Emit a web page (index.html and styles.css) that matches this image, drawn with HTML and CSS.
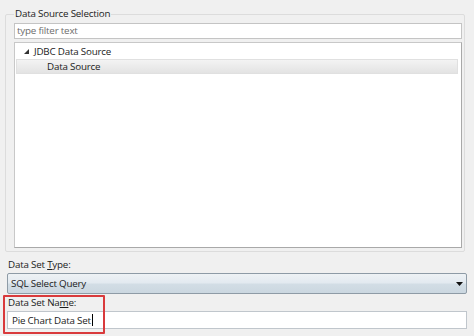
FILE: index.html
```html
<!DOCTYPE html>
<html lang="en">
<head>
    <meta charset="UTF-8">
    <title>New Data Set</title>
    <link rel="stylesheet" href="styles.css">
</head>
<body>

<div class="page">
    <fieldset class="group">
        <legend>Data Source Selection</legend>
        <div class="filter">type filter text</div>
        <div class="tree">
            <div class="tree-row">
                <svg class="twisty" width="5" height="5" viewBox="0 0 5 5"><polygon points="5,0 5,5 0,5" fill="#333"/></svg>
                <span>JDBC Data Source</span>
            </div>
            <div class="tree-row child selected">
                <span>Data Source</span>
            </div>
        </div>
    </fieldset>

    <div class="field">
        <div class="label">Data Set <u>T</u>ype:</div>
        <div class="combo">
            <span>SQL Select Query</span>
            <svg width="7" height="4" viewBox="0 0 7 4"><polygon points="0,0 7,0 3.5,4" fill="#111"/></svg>
        </div>
    </div>

    <div class="field name-field">
        <div class="label">Data Set Na<u>m</u>e:</div>
        <div class="text-input">Pie Chart Data Set<span class="caret"></span></div>
        <div class="highlight"></div>
    </div>
</div>

</body>
</html>
```

FILE: styles.css
```css
body {
    margin: 0;
    background-color: #f0f0f0;
    font-family: "Open Sans", "Noto Sans", sans-serif;
    font-size: 9.8px;
    letter-spacing: -0.2px;
    color: #1b1b1b;
}

.page {
    width: 474px;
    height: 336px;
    overflow: hidden;
}

.group {
    margin: 6px 9px 0 5px;
    padding: 1px 2px 3px 8px;
    border: 1px solid #dcdcdc;
    border-radius: 2px;
}

.group legend {
    padding: 0 1px;
    margin-left: 0;
    line-height: 16px;
}

.filter {
    height: 14px;
    line-height: 14px;
    padding-left: 2px;
    border: 1px solid #c4c4c4;
    background: white;
    color: #6d6d6d;
}

.tree {
    margin-top: 3px;
    height: 206px;
    padding: 1px 1px 0;
    background: white;
    border: 1px solid #a9a9a9;
    border-top-color: #c8c8c8;
    border-left-color: #c8c8c8;
    box-sizing: border-box;
}

.tree-row {
    display: flex;
    align-items: center;
    height: 13px;
    line-height: 13px;
    padding-left: 7px;
    border: 1px solid transparent;
}

.twisty {
    margin-right: 5px;
}

.tree-row.child {
    padding-left: 30px;
}

.tree-row.selected {
    background: linear-gradient(#f3f3f3, #e3e3e3);
    border-color: #e0e0e0;
    margin-right: 2px;
}

.field {
    margin: 5px 7px 0 7px;
}

.label {
    line-height: 16px;
    padding-left: 1px;
}

.combo {
    display: flex;
    align-items: center;
    justify-content: space-between;
    height: 19px;
    padding: 0 3px 0 3px;
    border: 1px solid #8e9ba6;
    border-radius: 2px;
    background: linear-gradient(#eef2f5 0%, #e3eaf0 45%, #d2dde5 55%, #cbd7e0 100%);
}

.name-field {
    position: relative;
    margin-top: 1px;
}

.text-input {
    display: flex;
    align-items: center;
    height: 16px;
    padding-left: 4px;
    background: white;
    border: 1px solid #c0c6cc;
}

.caret {
    display: inline-block;
    width: 0;
    height: 12px;
    margin-left: 1px;
    border-left: 1px solid #000;
}

.highlight {
    position: absolute;
    left: -4px;
    top: 0;
    width: 98px;
    height: 35px;
    border: 2px solid #d93a3c;
    border-radius: 1px;
}
```
